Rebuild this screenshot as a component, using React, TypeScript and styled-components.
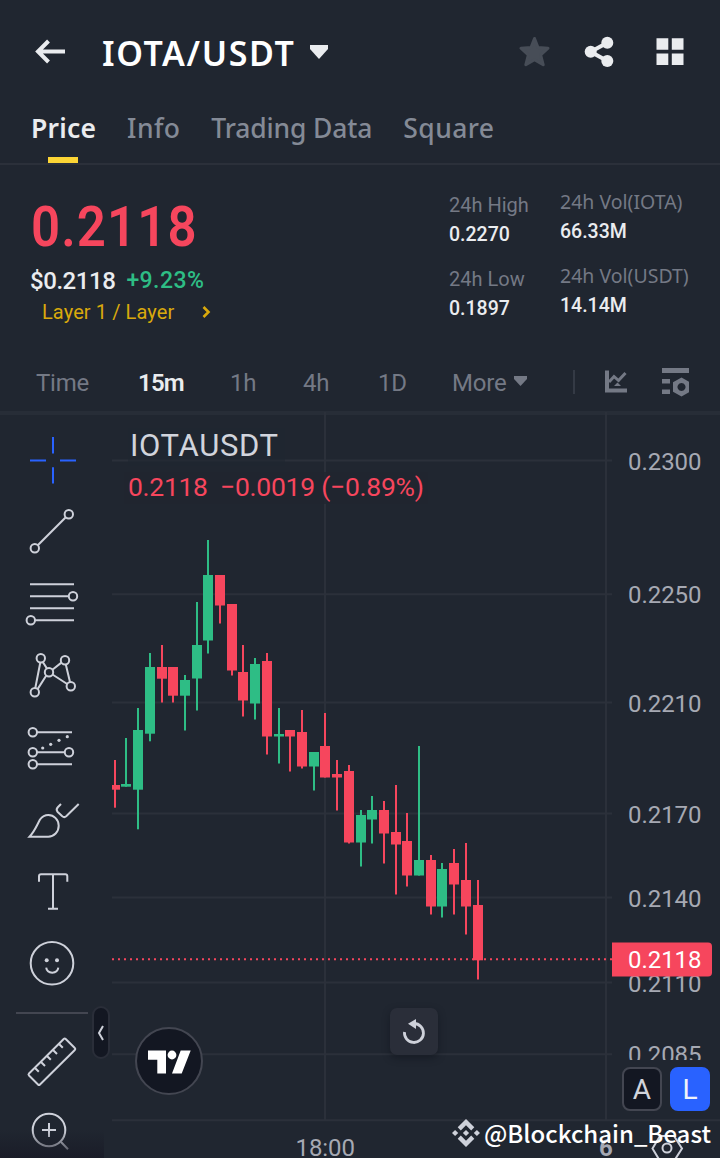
import React from "react";
import styled, { createGlobalStyle } from "styled-components";

const c = {
  bg: "#202630",
  line: "#2b303a",
  text: "#eaecef",
  muted: "#848a96",
  dim: "#747985",
  red: "#f6465d",
  green: "#2ebd85",
  yellow: "#fcd535",
  gold: "#d9a90c",
  icon: "#ced1da",
  axis: "#a6a9b3",
  dark: "#131722",
  blue: "#2962ff",
};

const Global = createGlobalStyle`
  * { box-sizing: border-box; }
  body { margin: 0; background: ${c.bg}; font-family: Roboto, "Liberation Sans", sans-serif; }
`;

const Screen = styled.main`
  display: flex;
  flex-direction: column;
  position: relative;
  width: 720px;
  height: 1158px;
  overflow: hidden;
  background: ${c.bg};
  svg { display: block; flex: none; }
`;

const Header = styled.header`
  display: flex;
  align-items: center;
  height: 103px;
  padding: 0 34px 0 34px;
`;

const Pair = styled.h1`
  margin: 2px 14px 0 36px;
  width: 194px;
  font: 600 34px/50px "Noto Sans", sans-serif;
  letter-spacing: 1.6px;
  color: #fff;
  white-space: nowrap;
`;

const HeaderActions = styled.div`
  display: flex;
  align-items: center;
  margin-left: auto;
  svg + svg { margin-left: 32px; }
  svg:last-child { margin-left: 39px; }
`;

const Tabs = styled.nav`
  display: flex;
  gap: 31px;
  height: 62px;
  padding-left: 31px;
  border-bottom: 2px solid ${c.line};
`;

const Tab = styled.span<{ $active?: boolean; $track?: number }>`
  display: flex;
  flex-direction: column;
  align-items: center;
  justify-content: space-between;
  font: ${(p) => (p.$active ? 600 : 500)} 26.5px/50px "Noto Sans", sans-serif;
  letter-spacing: ${(p) => p.$track ?? 0}px;
  white-space: nowrap;
  color: ${(p) => (p.$active ? c.text : c.muted)};
  &::after {
    content: "";
    width: 30px;
    height: 6px;
    margin-right: 2px;
    background: ${(p) => (p.$active ? c.yellow : "transparent")};
  }
`;

const Summary = styled.section`
  display: flex;
  height: 182px;
  padding-left: 31px;
`;

const PriceColumn = styled.div`
  display: flex;
  flex-direction: column;
  width: 418px;
  padding-top: 29px;
`;

const LastPrice = styled.div`
  font-size: 56px;
  line-height: 66px;
  font-weight: 600;
  letter-spacing: 1.2px;
  color: ${c.red};
  transform: scaleX(0.91);
  transform-origin: left;
`;

const FiatRow = styled.div`
  display: flex;
  gap: 11px;
  margin: 5px 0 0 -1px;
  font-size: 24px;
  letter-spacing: -0.45px;
  line-height: 32px;
  font-weight: 500;
  color: ${c.text};
`;

const Change = styled.span`
  font-size: 23px;
  letter-spacing: 0.45px;
  color: ${c.green};
`;

const Sector = styled.div`
  display: flex;
  align-items: center;
  gap: 27px;
  padding-left: 11px;
  font-size: 20px;
  line-height: 31px;
  letter-spacing: 0.1px;
  color: ${c.gold};
  svg { margin: -2px 0 0 1px; }
`;

const StatColumn = styled.div<{ $top: number; $width: number }>`
  display: flex;
  flex-direction: column;
  gap: 18px;
  width: ${(p) => p.$width}px;
  padding-top: ${(p) => p.$top}px;
`;

const Stat = styled.div`
  height: 56px;
  font-size: 20px;
  line-height: 28px;
  white-space: nowrap;
`;

const StatLabel = styled.div<{ $slab?: boolean }>`
  color: ${c.dim};
  font-family: ${(p) => (p.$slab ? '"Noto Sans"' : "Roboto")}, sans-serif;
  transform: ${(p) => (p.$slab ? "scaleX(0.975)" : "none")};
  transform-origin: left;
`;

const StatValue = styled.div`
  font-weight: 500;
  font-size: 19.5px;
  line-height: 32px;
  color: ${c.text};
`;

const Intervals = styled.nav`
  display: flex;
  align-items: center;
  height: 68px;
  padding: 6px 0 0 36px;
  border-bottom: 4px solid #272d37;
`;

const Interval = styled.span<{ $width: number; $active?: boolean }>`
  display: flex;
  align-items: center;
  gap: 9px;
  width: ${(p) => p.$width}px;
  padding-top: 2px;
  font-size: 24px;
  letter-spacing: ${(p) => (p.$active ? -0.8 : -0.2)}px;
  font-weight: ${(p) => (p.$active ? 600 : 400)};
  color: ${(p) => (p.$active ? c.text : c.dim)};
  svg { margin: -4px 0 0 -1px; }
`;

const Separator = styled.i`
  width: 2px;
  height: 24px;
  margin-right: 30px;
  background: #343a45;
`;

const ChartArea = styled.section`
  position: relative;
  display: flex;
  height: 743px;
`;

const ToolRail = styled.aside`
  display: flex;
  flex-direction: column;
  width: 112px;
  padding: 10px 0 0 16px;
`;

const ToolDivider = styled.hr`
  width: 72px;
  height: 2px;
  margin: 11px 0;
  border: 0;
  background: #434651;
`;

const RailFade = styled.div`
  position: absolute;
  left: 0;
  bottom: 0;
  width: 104px;
  height: 28px;
  background: linear-gradient(rgba(25, 27, 38, 0), #191b27);
  opacity: 0.85;
`;

const RailToggle = styled.button`
  position: absolute;
  left: 92px;
  top: 591px;
  display: grid;
  place-items: center;
  width: 18px;
  height: 53px;
  padding: 0;
  border: 2px solid #2a2e39;
  border-radius: 9px;
  background: ${c.dark};
`;

const Badge = styled.div`
  position: absolute;
  left: 135px;
  top: 612px;
  display: grid;
  place-items: center;
  width: 68px;
  height: 68px;
  padding-top: 2px;
  border: 2px solid #434651;
  border-radius: 50%;
  background: ${c.dark};
`;

const ResetButton = styled.button`
  position: absolute;
  left: 390px;
  top: 593px;
  width: 48px;
  height: 47px;
  padding: 0;
  border: 0;
  border-radius: 7px;
  background: #2a2e39;
  box-shadow: 0 3px 7px rgba(15, 18, 28, 0.55);
`;

const ScaleModes = styled.div`
  position: absolute;
  left: 622px;
  top: 652px;
  display: flex;
  gap: 8px;
`;

const ScaleMode = styled.button<{ $on?: boolean }>`
  width: 40px;
  height: 44px;
  padding: 0;
  border: 2px solid ${(p) => (p.$on ? c.blue : "#434651")};
  border-radius: 8px;
  background: ${(p) => (p.$on ? c.blue : c.dark)};
  color: ${(p) => (p.$on ? "#f0f3fa" : "#d1d4dc")};
  font: 400 28px/42px Roboto, sans-serif;
`;

const Watermark = styled.div`
  position: absolute;
  right: 8px;
  bottom: 8px;
  display: flex;
  align-items: center;
  gap: 4px;
  color: #fff;
  font: 500 24px/34px "Noto Sans CJK SC", sans-serif;
  white-space: nowrap;
`;

const Handle = styled.span`
  display: block;
  width: 228px;
`;

const Stroke = styled.svg`
  fill: none;
  stroke: ${c.icon};
  stroke-width: 2;
`;

const Tool = ({ children, height = 72 }: { children: React.ReactNode; height?: number }) => (
  <Stroke width={72} height={height} viewBox={`0 0 72 ${height}`}>{children}</Stroke>
);

// Each candle: x, high, body top, body bottom, low, rising
type Candle = [number, number, number, number, number, boolean];
const candles: Candle[] = [
  [115, 760, 785, 789.7, 807.7, false],
  [126, 738, 784, 786.7, 786.7, true],
  [138, 708, 730, 789.7, 829.3, true],
  [150, 653, 667, 733.7, 741.3, true],
  [162, 645, 667, 678.7, 702.5, false],
  [173, 667, 667, 695.7, 702.5, false],
  [185, 675, 680, 695.7, 730.5, true],
  [197, 602, 645, 678.5, 710.5, true],
  [208, 540, 575, 640.5, 653.5, true],
  [220, 575, 575, 605.5, 623.5, false],
  [232, 604, 604, 670.5, 675.5, false],
  [243, 645, 672, 700.5, 716.5, false],
  [255, 658, 664, 703.5, 719.5, true],
  [267, 653, 661, 736.5, 754.5, false],
  [279, 708, 734, 736.5, 763.5, true],
  [290, 730, 730, 736.5, 771.5, false],
  [302, 710, 732, 766.5, 768.5, false],
  [314, 752, 752, 766.5, 790.5, true],
  [325, 713, 746, 777.5, 777.5, false],
  [337, 760, 774, 777.5, 810.5, false],
  [349, 765, 771, 842.5, 843.5, false],
  [361, 810, 815, 842.5, 866.5, true],
  [372, 796, 810, 819.5, 843.5, true],
  [384, 801, 810, 833.5, 863.5, false],
  [396, 785, 832, 844.5, 894.5, false],
  [407, 813, 841, 875.5, 886.5, false],
  [419, 746, 860, 875.5, 875.5, true],
  [431, 855, 860, 906.5, 914.5, false],
  [442, 863, 869, 906.5, 917.5, true],
  [454, 849, 863, 884.5, 914.5, false],
  [466, 843, 880, 906.5, 934.5, false],
  [478, 880, 905, 960.3, 979.5, false],
];

const ticks: [string, number][] = [
  ["0.2300", 460.5],
  ["0.2250", 594.3],
  ["0.2210", 702.5],
  ["0.2170", 813.5],
  ["0.2140", 897.5],
  ["0.2110", 982.5],
  ["0.2085", 1054.3],
];

const PriceChart = () => (
  <svg width={608} height={746} viewBox="112 412 608 746" fontFamily="Roboto, sans-serif" fontSize={24}>
    <defs>
      <clipPath id="axis"><rect x={612} y={412} width={108} height={648} /></clipPath>
      <clipPath id="plot"><rect x={112} y={412} width={500} height={708} /></clipPath>
    </defs>
    <g stroke={c.line} strokeWidth={2}>
      {ticks.map(([label, y]) => <line key={label} x1={112} x2={612} y1={y} y2={y} />)}
      <path d="M325 412V1120M606 412V1120M112 1120.3H720" />
    </g>
    <rect x={128} y={428} width={157} height={38} fill={c.bg} opacity={0.6} />
    <rect x={124} y={472} width={304} height={32} fill={c.bg} opacity={0.8} />
    <g clipPath="url(#plot)">
      {candles.map(([x, high, top, bottom, low, up]) => (
        <g key={x} fill={up ? c.green : c.red}>
          <rect x={x - 1} y={high} width={2} height={low - high} />
          <rect x={x - 5} y={top} width={10} height={bottom - top} />
        </g>
      ))}
    </g>
    <path d="M112 959.3H612" stroke={c.red} strokeWidth={2} strokeDasharray="2 4" />
    <text x={130} y={456.3} fontSize={31} fill="#d1d4dc" textLength={148}>IOTAUSDT</text>
    <g fontSize={26.5} fill={c.red}>
      <text x={128} y={496} textLength={80}>0.2118</text>
      <text x={220} y={496} textLength={204}>−0.0019 (−0.89%)</text>
    </g>
    <g fill={c.axis} clipPath="url(#axis)">
      {ticks.map(([label, y]) => <text key={label} x={628} y={y + 9} textLength={73.5}>{label}</text>)}
    </g>
    <path d="M612 942.5H708a4 4 0 0 1 4 4V972.5a4 4 0 0 1-4 4H612z" fill={c.red} />
    <text x={628} y={968.3} fill="#fff" textLength={73.5}>0.2118</text>
    <g fill={c.axis}>
      <text x={295.5} y={1156} textLength={59.5}>18:00</text>
      <text x={599} y={1156} fontWeight={700}>6</text>
    </g>
    <g fill="none" stroke={c.icon} strokeWidth={2}>
      <path d="M660 1136H674L682 1148.5L674 1161H660L652.5 1148.5Z" />
      <circle cx={667} cy={1148} r={4.5} />
    </g>
  </svg>
);

const ChartOffset = styled.div`
  margin-top: -3px;
`;

export default function App() {
  return (
    <Screen>
      <Global />
      <Header>
        <svg width={32} height={26} viewBox="0 0 32 26" fill="none" stroke={c.text} strokeWidth={4}>
          <path d="M31 12.500H4M14.500 2L4 12.500L14.500 23" />
        </svg>
        <Pair>IOTA/USDT</Pair>
        <svg width={18} height={14} viewBox="0 0 18 14" fill={c.text}><path d="M0 0H18V4L9 14L0 4Z" /></svg>
        <HeaderActions>
          <svg width={32} height={32} viewBox="0 0 32 32" fill="#474d57" stroke="#474d57" strokeWidth={3} strokeLinejoin="round">
            <path d="M15.500 2.500L19 11.500L29 12.200L21.700 19L24.200 28.800L15.500 23.800L6.800 28.800L9.300 19L2 12.200L12 11.500Z" />
          </svg>
          <svg width={32} height={32} viewBox="0 0 32 32" fill={c.text}>
            <path d="M24.300 6.700L7.700 15.700L24.300 25" fill="none" stroke={c.text} strokeWidth={4} />
            <circle cx={24.300} cy={6.700} r={6} /><circle cx={7.700} cy={15.700} r={6} /><circle cx={24.300} cy={25} r={6} />
          </svg>
          <svg width={32} height={32} viewBox="0 0 32 32" fill={c.text}>
            <path d="M2.500 2.300H14.300V13.800H2.500zM17.800 2.300H29.500V13.800H17.800zM2.500 17.500H14.300V29H2.500zM17.800 17.500H29.500V29H17.800z" />
          </svg>
        </HeaderActions>
      </Header>
      <Tabs>
        <Tab $active $track={0.2}>Price</Tab>
        <Tab $track={0.4}>Info</Tab>
        <Tab $track={-0.15}>Trading Data</Tab>
        <Tab $track={0.4}>Square</Tab>
      </Tabs>
      <Summary>
        <PriceColumn>
          <LastPrice>0.2118</LastPrice>
          <FiatRow>$0.2118<Change>+9.23%</Change></FiatRow>
          <Sector>
            Layer 1 / Layer
            <svg width={9} height={12} viewBox="0 0 9 12" fill="none" stroke={c.gold} strokeWidth={2.600}><path d="M1.500 1L6.500 6L1.500 11" /></svg>
          </Sector>
        </PriceColumn>
        <StatColumn $top={26} $width={111}>
          <Stat><StatLabel>24h High</StatLabel><StatValue>0.2270</StatValue></Stat>
          <Stat><StatLabel>24h Low</StatLabel><StatValue>0.1897</StatValue></Stat>
        </StatColumn>
        <StatColumn $top={23} $width={150}>
          <Stat><StatLabel $slab>24h Vol(IOTA)</StatLabel><StatValue>66.33M</StatValue></Stat>
          <Stat><StatLabel $slab>24h Vol(USDT)</StatLabel><StatValue>14.14M</StatValue></Stat>
        </StatColumn>
      </Summary>
      <Intervals>
        <Interval $width={102}>Time</Interval>
        <Interval $width={92} $active>15m</Interval>
        <Interval $width={73}>1h</Interval>
        <Interval $width={75}>4h</Interval>
        <Interval $width={74}>1D</Interval>
        <Interval $width={121}>
          More
          <svg width={13} height={10} viewBox="0 0 13 10" fill={c.dim}><path d="M0 0H13V3L6.500 10L0 3Z" /></svg>
        </Interval>
        <Separator />
        <svg width={24} height={24} viewBox="0 0 24 24" fill="none" stroke={c.dim}>
          <path d="M2 0.500V20.500H22" strokeWidth={4} />
          <path d="M4 12L9 6.500L13.500 10.500L20.500 3" strokeWidth={3} />
          <path d="M9 16L12.500 12.500L16 16Z" fill={c.dim} stroke="none" />
        </svg>
        <svg width={60} height={30} viewBox="-33 0 60 30" fill={c.dim}>
          <path d="M0 1H28V6H0zM0 12H8V16.500H0zM0 22.500H8V27H0z" />
          <path fillRule="evenodd" d="M19.500 10.500L28 15.200V24.800L19.500 29.500L11 24.800V15.200ZM19.500 16a4 4 0 1 0 .01 0Z" />
        </svg>
      </Intervals>
      <ChartArea>
        <ToolRail>
          <Tool><path stroke={c.blue} d="M37 12V28.500M37 42.300V58.500M14 35.500H30M44 35.500H60" /></Tool>
          <Tool><path d="M21.800 48.300L49.800 20.300" /><circle cx={52.8} cy={17.3} r={4.2} /><circle cx={18.800} cy={51.300} r={4.200} /></Tool>
          <Tool>
            <path d="M14 15.300H58M14 27.300H52.800M14 39.300H58M19 51.300H58" />
            <circle cx={57} cy={27.300} r={4.200} /><circle cx={14.800} cy={51.300} r={4.200} />
          </Tool>
          <Tool>
            <path d="M24.300 21.500L19.300 47M26.800 21L31 27.600M45.400 21.600L36.400 28.700M49.800 23.500L54 41.100M36.500 33.500L51.200 43M30.300 34.500L21.600 48.100" />
            <circle cx={24.800} cy={17.300} r={4.200} /><circle cx={49} cy={19.300} r={4.200} /><circle cx={33} cy={31.300} r={4.200} />
            <circle cx={18.800} cy={51.300} r={4.200} /><circle cx={54.800} cy={45.300} r={4.200} />
          </Tool>
          <Tool>
            <path d="M21 19.300H56M21 39.300H48.800M21 51.300H56" />
            <circle cx={16.800} cy={19.300} r={4.200} /><circle cx={16.800} cy={39.300} r={4.200} />
            <circle cx={16.800} cy={51.300} r={4.200} /><circle cx={53} cy={39.300} r={4.200} />
            <g fill={c.icon} stroke="none"><circle cx={26.700} cy={35} r={1.600} /><circle cx={34.700} cy={31.300} r={1.600} /><circle cx={43} cy={27.300} r={1.600} /><circle cx={51.300} cy={23.700} r={1.600} /></g>
          </Tool>
          <Tool>
            <path d="M13.500 51.700C19 46 21 40 24 34.500C26.500 31.200 29 30 32.300 30C38 30 42.700 34.800 42.700 40.700C42.700 46.900 38 51.700 32.300 51.700Z" />
            <path d="M45 19L41.800 22.300Q39.600 24.700 41.700 27L46.300 31.300Q48.300 33 50.200 31.300L62.700 19" />
          </Tool>
          <Tool><path d="M23 24.700V19.300Q23 17.300 25 17.300H49.300Q51.300 17.300 51.300 19.300V24.700M37 17.300V51.700M32 51.700H42" /></Tool>
          <Tool>
            <circle cx={36} cy={34.300} r={21.300} />
            <path d="M30.200 38.700C31 45.300 41.500 45.300 42.300 38.700" />
            <g fill={c.icon} stroke="none"><circle cx={30.700} cy={31.300} r={2} /><circle cx={41} cy={31.300} r={2} /></g>
          </Tool>
          <ToolDivider />
          <Tool>
            <path strokeLinejoin="round" d="M47.700 14Q48.700 13 49.700 14L58.800 23Q59.800 24 58.800 25L24 59.500Q23 60.500 22 59.500L13 50.500Q12 49.500 13 48.500Z" />
            <path d="M19 43L22.800 46.800M25 37L29 41M31 31L34.800 34.800M37 25L41 29M43 19L46.800 22.800" />
          </Tool>
          <Tool height={61}>
            <circle cx={33} cy={33} r={16.300} /><path d="M26 33H40M33 26V40M45 45L52 52.300" />
          </Tool>
        </ToolRail>
        <ChartOffset><PriceChart /></ChartOffset>
        <RailFade />
        <RailToggle>
          <svg width={8} height={16} viewBox="0 0 8 16" fill="none" stroke={c.icon} strokeWidth={2}><path d="M6 1L2 8L6 15" /></svg>
        </RailToggle>
        <Badge>
          <svg width={44} height={24} viewBox="0 0 44 24" fill="#fff">
            <path d="M1 0.500H19V23.500H10.300V9.800H1zM33.700 0.500H43.700L34.700 23.500H25z" /><circle cx={25} cy={5} r={4.400} />
          </svg>
        </Badge>
        <ResetButton>
          <svg width={48} height={47} viewBox="0 0 48 47">
            <path d="M14.500 24A9.500 9.500 0 1 0 24 15.500" fill="none" stroke={c.icon} strokeWidth={2.800} />
            <path d="M26 11V21L18 15.800Z" fill={c.icon} />
          </svg>
        </ResetButton>
        <ScaleModes>
          <ScaleMode>A</ScaleMode>
          <ScaleMode $on>L</ScaleMode>
        </ScaleModes>
        <Watermark>
          <svg width={28} height={28} viewBox="0 0 28 28" fill={c.icon}>
            <path d="M14 0L22.300 8.300L19.200 11.400L14 6.200L8.800 11.400L5.700 8.300ZM14 28L5.700 19.700L8.800 16.600L14 21.800L19.200 16.600L22.300 19.700ZM14 10.900L17.100 14L14 17.100L10.900 14ZM3.100 10.900L6.200 14L3.100 17.100L0 14ZM24.900 10.900L28 14L24.900 17.100L21.800 14Z" />
          </svg>
          <Handle>@Blockchain_Beast</Handle>
        </Watermark>
      </ChartArea>
    </Screen>
  );
}
